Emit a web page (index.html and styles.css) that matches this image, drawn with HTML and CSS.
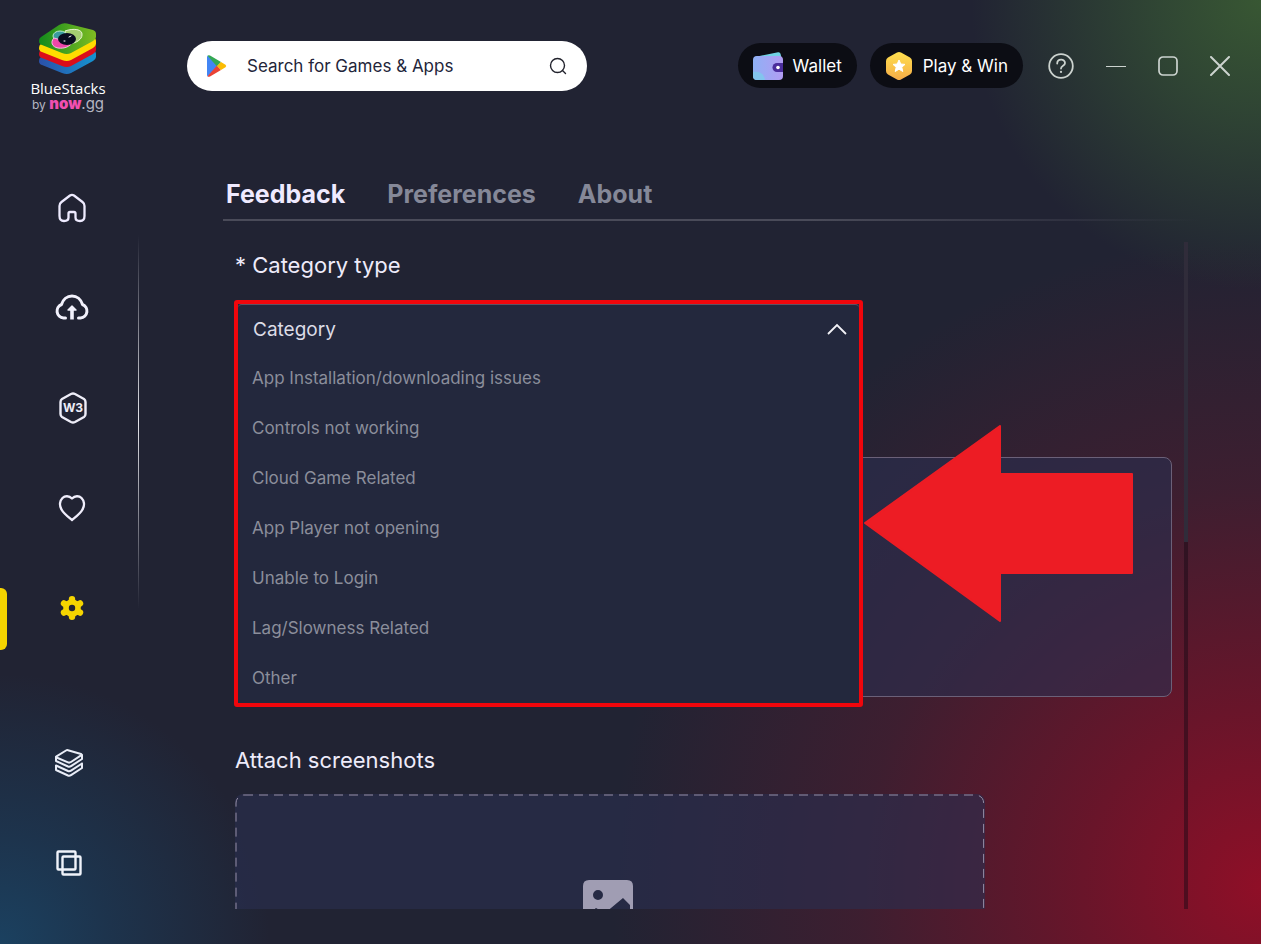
FILE: index.html
```
<!DOCTYPE html>
<html lang="en">
<head>
    <meta charset="UTF-8">
    <meta name="viewport" content="width=device-width, initial-scale=1.0">
    <title>BlueStacks - Feedback</title>
    <link rel="stylesheet" href="styles.css">
</head>
<body>
    <div class="app">
        <aside class="sidebar">
            <div class="logo">
                <svg width="58" height="52" viewBox="0 0 58 52">
                    <defs>
                        <linearGradient id="green" x1="0" x2="1"><stop offset="0" stop-color="#128a1c"/><stop offset="1" stop-color="#80bd22"/></linearGradient>
                        <linearGradient id="blue" x1="0" x2="1"><stop offset="0" stop-color="#2b50a8"/><stop offset="1" stop-color="#1593cf"/></linearGradient>
                        <path id="layer" d="M20 2q4-2.500 8-1.500L54 7q3 1 3 4v3q0 2-3 4L32 30q-4 2-9 0L3 22q-3-1-3-4t2-4z"/>
                    </defs>
                    <use href="#layer" y="20" fill="url(#blue)"/>
                    <use href="#layer" y="13" fill="#db0d1a"/>
                    <use href="#layer" y="7" fill="#ffdc00"/>
                    <use href="#layer" fill="url(#green)"/>
                    <path fill="#a6ce72" stroke="#e6f5cf" d="M26 8c8-3 18-2 17 4 0 4-5 8-13 9z"/>
                    <ellipse cx="21" cy="13" rx="7" ry="5" fill="#3b9aa0" stroke="#b9ecc8"/>
                    <path fill="#ed47a9" stroke="#f6bfe2" d="M15 15c-4 4-2 9 4 10 7 1 12-2 14-5z"/>
                    <ellipse cx="28" cy="16" rx="9" ry="6" fill="#090b20"/>
                    <path stroke="#fff" stroke-linecap="round" d="M30 14l2-1M25 18h1"/>
                </svg>
                <span class="logo-name">BlueStacks</span>
                <span class="logo-by">by <b>now</b><i>.gg</i></span>
            </div>
            <nav class="side-nav">
                <a href="#home" aria-label="Home">
                    <svg width="28" height="30" viewBox="0 0 28 30" fill="none" stroke="#eeebff" stroke-width="2.300" stroke-linejoin="round"><path d="M12 2.500q2-1.400 4 0l8.500 6.500q2 1.500 2 4v10q0 5-4.500 5t-4.500-3.500v-4q0-1.500-1.500-1.500h-4q-1.500 0-1.500 1.500v4q0 3.500-4.500 3.500t-4.500-5V13q0-2.500 2-4z"/></svg>
                </a>
                <a href="#cloud" aria-label="Cloud">
                    <svg width="36" height="30" viewBox="0 0 36 30" fill="none" stroke="#f2f1fc" stroke-width="3" stroke-linecap="round" stroke-linejoin="round"><path d="M11.500 25H9.500a7 7 0 0 1-2-13.500C9 6.500 13 3 18 3s9 3.500 10.500 8.500a7 7 0 0 1-2 13.500h-2"/><path d="M18 26.500V16" stroke-width="3.600" stroke-linecap="butt"/><path d="M14 17l4-4 4 4z" fill="#f2f1fc" stroke-width="1.400"/></svg>
                </a>
                <a href="#w3" aria-label="Web3">
                    <svg class="icon-w3" width="32" height="34" viewBox="0 0 32 34" fill="none" stroke="#eeedf8" stroke-width="2.400" stroke-linejoin="round"><path d="M15 3q2-1 4 0l9 5q1.500 1 1.500 3v12q0 2-1.500 3l-9 5q-2 1-4 0l-9-5q-1.500-1-1.500-3V11q0-2 1.500-3z"/><text x="17" y="21" text-anchor="middle">W3</text></svg>
                </a>
                <a href="#favourites" aria-label="Favourites">
                    <svg width="28" height="28" viewBox="0 0 28 28" fill="none" stroke="#f0eefc" stroke-width="2.400" stroke-linejoin="round"><path d="M14 4.500C11 1.500 7 1.500 4.500 4S1 11 3.500 15.500C6 20 11 23.500 14 26c3-2.500 8-6 10.500-10.500S26 6.500 23.500 4 17 1.500 14 4.500z"/></svg>
                </a>
                <a href="#settings" class="active" aria-label="Settings" aria-current="page">
                    <svg width="26" height="26" viewBox="-13 -13 26 26"><g stroke="#f5d400" stroke-width="6.400" stroke-linecap="round"><path d="M0-8.800V8.800M-8-4.600L8 4.600M-8 4.600L8-4.600"/></g><circle r="8.800" fill="#f5d400"/><circle r="3.200" fill="#212333"/></svg>
                </a>
                <a href="#instances" class="lower" aria-label="Instances">
                    <svg class="icon-layers" width="30" height="30" viewBox="0 0 30 30" fill="none" stroke="#e9edf7" stroke-width="2" stroke-linejoin="round" stroke-linecap="round"><path d="M14 2.200l13 3.800q1 .5 0 1.300L17 14q-1.500 1-3 .4L2.500 9.500q-1-.5 0-1.200L12 2.500q1-.6 2-.3z"/><path d="M2 13l12 5.500q1.500.6 3-.4L28 11M2 17.500L14 23q1.500.6 3-.4L28 15.500M2 22l12 5.500q1.500.6 3-.4L28 20M2 9v4M28 7v4M2 17.500V22M28 15.500V20"/></svg>
                </a>
                <a href="#copies" aria-label="Multi window">
                    <svg class="icon-layers" width="28" height="28" viewBox="0 0 28 28" fill="none" stroke="#f0f3fa" stroke-width="2.400"><rect x="2.500" y="2.500" width="18" height="18" rx="1"/><rect x="7.500" y="7.500" width="18" height="18" rx="1"/></svg>
                </a>
            </nav>
        </aside>

        <main class="main">
            <header class="topbar">
                <form class="search">
                    <svg width="20" height="22" viewBox="0 0 20 22">
                        <path fill="#4285f4" d="M0 2v18q0 1 1 1.500L10.500 11 1 .5Q0 1 0 2z"/>
                        <path fill="#34a853" d="M.5.8Q1.500-.3 3 .5L14 7l-4 4.500z"/>
                        <path fill="#ea4335" d="M.5 21.200q1 1.100 2.500.3L14 15l-4-4.500z"/>
                        <path fill="#fbbc04" d="M14 7l4.500 2.700q1.500 1.300 0 2.600L14 15l-4-4z"/>
                    </svg>
                    <input type="text" placeholder="Search for Games &amp; Apps" aria-label="Search for Games &amp; Apps">
                    <button type="submit" aria-label="Search">
                        <svg width="18" height="18" viewBox="0 0 18 18" fill="none" stroke="#22232d" stroke-width="1.400" stroke-linecap="round"><circle cx="8.500" cy="8.500" r="7"/><path d="M13.500 13.500l3 3"/></svg>
                    </button>
                </form>
                <div class="actions">
                    <button type="button" class="pill">
                        <svg width="30" height="28" viewBox="0 0 30 28">
                            <defs><linearGradient id="wallet" x1="0" x2="1"><stop offset="0" stop-color="#8fb1f5"/><stop offset="1" stop-color="#b29cf2"/></linearGradient></defs>
                            <path fill="#70d3e4" d="M2 5L25 .2q2-.4 2.500 1.500L29 8H2z"/>
                            <rect y="4" width="30" height="24" rx="4" fill="url(#wallet)"/>
                            <path fill="#83c5ee" d="M0 20c7-1 11 2 12 8H4q-4 0-4-4z"/>
                            <path fill="#4b2d9c" d="M30 11h-6a4.500 4.500 0 0 0 0 9h6z"/>
                            <circle cx="25" cy="15.500" r="1.800" fill="#fff"/>
                        </svg>
                        Wallet
                    </button>
                    <button type="button" class="pill">
                        <svg width="28" height="30" viewBox="0 0 28 30">
                            <defs><linearGradient id="coin" x1="0" y1="0" x2="0" y2="1"><stop offset="0" stop-color="#ffe04e"/><stop offset="1" stop-color="#f5ac48"/></linearGradient></defs>
                            <path fill="url(#coin)" d="M12 1.500q2-1 4 0l9 5q2 1 2 3.500v10q0 2.500-2 3.500l-9 5q-2 1-4 0l-9-5q-2-1-2-3.500V10q0-2.500 2-3.500z"/>
                            <path fill="#fff" stroke="#fff" stroke-linejoin="round" d="M14 9l1.800 4 4.200.4-3.200 2.800 1 4.300-3.800-2.300-3.800 2.300 1-4.300L8 13.400l4.200-.4z"/>
                        </svg>
                        Play &amp; Win
                    </button>
                    <div class="window-buttons">
                        <button type="button" aria-label="Help"><svg width="26" height="26" viewBox="0 0 26 26" fill="none" stroke="#ccd3cf" stroke-width="1.800" stroke-linecap="round"><circle cx="13" cy="13" r="11.800"/><path d="M9.200 10.500c0-5 7.800-5 7.800-.5 0 3-4 2.500-4 5.500"/><path d="M13 18.800v.2" stroke-width="2.200"/></svg></button>
                        <button type="button" aria-label="Minimize"><svg width="20" height="20" viewBox="0 0 20 20" stroke="#ccd3cf"><path d="M0 10.500h20"/></svg></button>
                        <button type="button" aria-label="Maximize"><svg width="20" height="20" viewBox="0 0 20 20" fill="none" stroke="#ccd3cf" stroke-width="1.700"><rect x="1" y="1" width="18" height="18" rx="4"/></svg></button>
                        <button type="button" aria-label="Close"><svg width="20" height="20" viewBox="0 0 20 20" stroke="#ccd3cf" stroke-width="2" stroke-linecap="round"><path d="M1 1l18 18M19 1L1 19"/></svg></button>
                    </div>
                </div>
            </header>

            <nav class="tabs">
                <a href="#feedback" class="active">Feedback</a>
                <a href="#preferences">Preferences</a>
                <a href="#about">About</a>
            </nav>

            <div class="panel">
                <form class="feedback-form">
                    <label class="field-label" for="category">* Category type</label>
                    <div class="dropdown">
                        <select id="category">
                            <option>Category</option>
                        </select>
                        <div class="menu">
                            <div class="menu-head">
                                <span>Category</span>
                                <svg width="20" height="12" viewBox="0 0 20 12" fill="none" stroke="#f2f2f7" stroke-width="1.800"><path d="M1 11l9-9 9 9"/></svg>
                            </div>
                            <button type="button">App Installation/downloading issues</button>
                            <button type="button">Controls not working</button>
                            <button type="button">Cloud Game Related</button>
                            <button type="button">App Player not opening</button>
                            <button type="button">Unable to Login</button>
                            <button type="button">Lag/Slowness Related</button>
                            <button type="button">Other</button>
                        </div>
                        <svg class="arrow" width="270" height="198" viewBox="0 0 270 198" fill="#ed1c24" stroke="#ed1c24" stroke-width="2" stroke-linejoin="round"><path d="M1 98L136 1v48h132v99H136v48z"/></svg>
                    </div>

                    <textarea class="description" aria-label="Description"></textarea>

                    <label class="field-label" for="screenshots">Attach screenshots</label>
                    <div class="dropzone">
                        <svg class="dashes" width="100%" height="100%"><rect x="1" y="1" width="100%" height="100%" rx="8"/></svg>
                        <input type="file" id="screenshots" accept="image/*">
                        <svg width="50" height="50" viewBox="0 0 50 50">
                            <path fill="#a09db3" fill-rule="evenodd" d="M6 0h38q6 0 6 6v38q0 6-6 6H6q-6 0-6-6V6q0-6 6-6zM15 10a5 5 0 1 0 0 10 5 5 0 0 0 0-10zM40 18L22 33l-9-5-9 7v11h43V25z"/>
                        </svg>
                    </div>
                </form>
                <div class="scrollbar"><div class="thumb"></div></div>
            </div>
        </main>
    </div>
</body>
</html>
```

FILE: styles.css
```
* {
    box-sizing: border-box;
}

body {
    margin: 0;
    font-family: Inter, Roboto, sans-serif;
    color: #eeebfa;
    background-color: #212333;
}

button, input, select, textarea {
    font-family: inherit;
}

button {
    border: none;
    background: none;
    color: inherit;
    cursor: pointer;
}

svg {
    display: block;
    flex-shrink: 0;
}

.app {
    display: grid;
    grid-template-columns: 139px 1fr;
    height: 100vh;
    overflow: hidden;
    background:
        radial-gradient(circle at 100% 0, #385733 0, rgba(52, 80, 52, 0.75) 110px, rgba(40, 55, 52, 0) 290px),
        radial-gradient(circle at 0 100%, #1b4160 0, rgba(27, 60, 90, 0.65) 110px, rgba(30, 50, 75, 0) 270px),
        radial-gradient(circle at 100% 94%, #8f0f27 0, rgba(120, 18, 40, 0.8) 190px, rgba(100, 24, 44, 0.42) 400px, rgba(60, 30, 48, 0) 650px),
        #212333;
}

/* Sidebar */
.sidebar {
    display: flex;
    flex-direction: column;
}

.logo {
    display: flex;
    flex-direction: column;
    align-items: center;
    height: 158px;
    padding: 23px 3px 0 0;
}

.logo-name {
    margin-top: 4px;
    font: 15px/18px "Open Sans", sans-serif;
    color: #fff;
}

.logo-by {
    font: 12px/14px Inter, sans-serif;
    color: #b5b5c2;
    white-space: nowrap;
}

.logo-by b {
    font-weight: 900;
    font-size: 15px;
    color: #f04fb0;
}

.logo-by i {
    font-style: normal;
    font-size: 15px;
}

.side-nav {
    display: flex;
    flex-direction: column;
    background: linear-gradient(transparent, #e4e4ea 50%, transparent) right 77px / 1px 374px no-repeat;
}

.side-nav a {
    position: relative;
    display: flex;
    align-items: center;
    justify-content: center;
    width: 144px;
    height: 100px;
}

.side-nav .active::before {
    content: "";
    position: absolute;
    left: 0;
    top: 30px;
    width: 7px;
    height: 62px;
    border-radius: 0 6px 6px 0;
    background-color: #f5d400;
}

.side-nav .lower {
    margin-top: 55px;
}

.icon-layers {
    margin-right: 6px;
}

.icon-w3 text {
    font: bold 12px Inter, sans-serif;
    fill: #eeedf8;
    stroke: none;
}

/* Top bar */
.main {
    display: flex;
    flex-direction: column;
    min-width: 0;
    padding-bottom: 35px;
    height: 100vh;
}

.topbar {
    display: flex;
    align-items: center;
    justify-content: space-between;
    height: 131px;
    padding: 0 31px 0 48px;
    flex-shrink: 0;
}

.search {
    display: flex;
    align-items: center;
    width: 400px;
    height: 50px;
    padding: 0 20px;
    border-radius: 25px;
    background-color: #fff;
}

.search input {
    flex: 1;
    min-width: 0;
    padding: 0 20px;
    border: none;
    background: none;
    font-size: 17px;
}

.search input::placeholder {
    color: #23253a;
    opacity: 1;
}

.search button {
    padding: 0;
}

.actions {
    display: flex;
    align-items: center;
    gap: 13px;
}

.pill {
    display: flex;
    align-items: center;
    gap: 10px;
    height: 45px;
    padding: 0 15px;
    border-radius: 23px;
    background-color: #0c0d14;
    color: #fff;
    font-size: 17px;
}

.window-buttons {
    display: flex;
    align-items: center;
    gap: 32px;
    padding-left: 12px;
}

.window-buttons button {
    padding: 0;
}

/* Tabs */
.tabs {
    display: flex;
    gap: 42px;
    height: 90px;
    margin: 0 61px 0 84px;
    padding: 47px 0 0 3px;
    background: linear-gradient(90deg, #4a4b59 60%, transparent) bottom / 100% 2px no-repeat;
}

.tabs a {
    font-size: 25px;
    line-height: 32px;
    font-weight: 700;
    color: #858898;
    text-decoration: none;
}

.tabs .active {
    color: #efeaff;
}

/* Feedback form */
.panel {
    display: flex;
    flex: 1;
    min-height: 0;
    overflow: hidden;
    gap: 12px;
    margin-right: 73px;
    padding-left: 96px;
}

.feedback-form {
    flex: 1;
    padding-top: 28px;
}

.field-label {
    display: block;
    font-size: 22px;
    line-height: 32px;
}

.dropdown {
    position: relative;
    width: 67%;
    height: 50px;
    margin-top: 20px;
}

.dropdown select {
    width: 100%;
    height: 50px;
    padding: 0 16px;
    border: 1px solid #66687a;
    border-radius: 6px;
    background-color: #23283d;
    color: #dcdce6;
    font-size: 19px;
    appearance: none;
}

.menu {
    position: absolute;
    inset: -1px 0 auto -1px;
    border: 4px solid #f0060c;
    border-radius: 3px;
    background-color: #23283d;
}

.menu-head {
    display: flex;
    align-items: center;
    justify-content: space-between;
    height: 49px;
    padding: 0 12px 0 15px;
    border-top: 1px solid #5d5263;
    border-radius: 4px;
    font-size: 19px;
    color: #dcdce6;
}

.menu button {
    display: block;
    width: 100%;
    height: 50px;
    padding: 0 14px;
    text-align: left;
    font-size: 17px;
    color: #8b8e9b;
}

.arrow {
    position: absolute;
    left: calc(100% + 1px);
    top: 124px;
}

.description {
    display: block;
    width: 100%;
    height: 240px;
    margin: 106px 0 47px;
    border: 1px solid #6b6078;
    border-radius: 8px;
    background-color: rgba(41, 47, 80, 0.6);
    color: #eeebfa;
    resize: none;
}

.dropzone {
    position: relative;
    display: flex;
    justify-content: center;
    width: 80%;
    height: 220px;
    margin-top: 18px;
    padding: 86px 4px 0 0;
    border-radius: 8px;
    background-color: rgba(41, 47, 80, 0.6);
}

.dropzone input {
    position: absolute;
    inset: 0;
    opacity: 0;
}

.dashes {
    position: absolute;
    inset: 0;
}

.dashes rect {
    width: calc(100% - 2px);
    fill: none;
    stroke: #958da5;
    stroke-width: 1;
    stroke-dasharray: 9 6;
}

.scrollbar {
    width: 4px;
    margin-top: 21px;
    background-color: rgba(20, 8, 20, 0.45);
}

.thumb {
    height: 45%;
    background-color: #302c3a;
}
```
